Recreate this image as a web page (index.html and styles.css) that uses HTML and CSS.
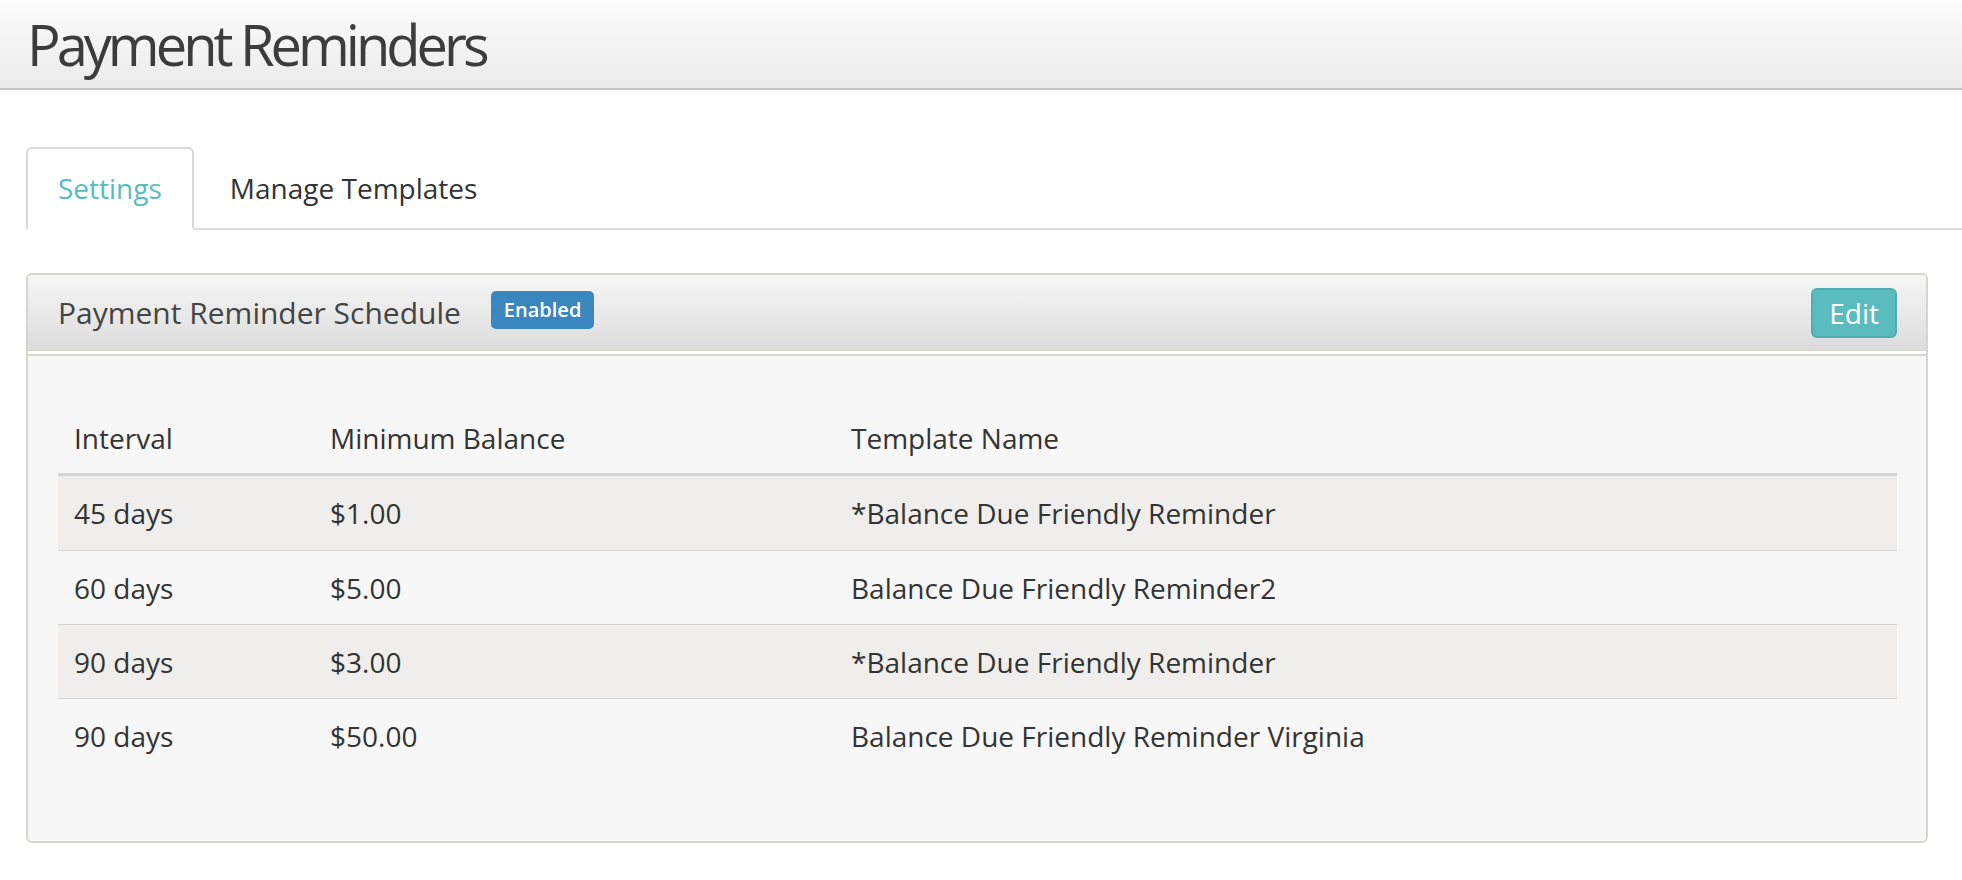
FILE: index.html
```html
<!DOCTYPE html>
<html lang="en">
<head>
<meta charset="utf-8">
<title>Payment Reminders</title>
<link rel="stylesheet" href="styles.css">
</head>
<body>
<header class="page-header">
  <h1 class="page-title">Payment Reminders</h1>
</header>
<main class="content">
  <nav class="tabs">
    <a class="tab tab-active">Settings</a>
    <a class="tab">Manage Templates</a>
  </nav>
  <section class="panel">
    <div class="panel-head">
      <h2 class="panel-title">Payment Reminder Schedule</h2>
      <span class="badge">Enabled</span>
      <button class="btn-edit">Edit</button>
    </div>
    <div class="panel-body">
      <table class="schedule">
        <colgroup>
          <col class="col-interval">
          <col class="col-balance">
          <col>
        </colgroup>
        <thead>
          <tr><th>Interval</th><th>Minimum Balance</th><th>Template Name</th></tr>
        </thead>
        <tbody>
          <tr><td>45 days</td><td>$1.00</td><td>*Balance Due Friendly Reminder</td></tr>
          <tr><td>60 days</td><td>$5.00</td><td>Balance Due Friendly Reminder2</td></tr>
          <tr><td>90 days</td><td>$3.00</td><td>*Balance Due Friendly Reminder</td></tr>
          <tr><td>90 days</td><td>$50.00</td><td>Balance Due Friendly Reminder Virginia</td></tr>
        </tbody>
      </table>
    </div>
  </section>
</main>
</body>
</html>
```

FILE: styles.css
```css
html, body {
  margin: 0;
  padding: 0;
  background: #ffffff;
}

body {
  font-family: "Open Sans", "Liberation Sans", sans-serif;
  color: #333333;
}

.page-header {
  height: 88px;
  background: linear-gradient(#fcfcfc, #ebebeb);
  border-bottom: 2px solid #c4c4c4;
}

.page-title {
  margin: 0;
  padding-left: 27px;
  font-size: 56px;
  font-weight: 400;
  letter-spacing: -4px;
  line-height: 88px;
  color: #3c3c3c;
}

.content {
  padding: 57px 0 0 26px;
}

.tabs {
  display: flex;
  border-bottom: 2px solid #dddddd;
}

.tab {
  display: block;
  margin-right: 4px;
  margin-bottom: -2px;
  padding: 0 30px;
  font-size: 28px;
  line-height: 79px;
  color: #333333;
  border: 2px solid transparent;
  border-radius: 6px 6px 0 0;
}

.tab-active {
  color: #56bcc0;
  background: #ffffff;
  border-color: #d9d9d9 #d9d9d9 #ffffff;
}

.panel {
  margin: 43px 34px 0 0;
  border: 2px solid #d6d6cf;
  border-radius: 6px;
  background: #ffffff;
  overflow: hidden;
}

.panel-head {
  display: flex;
  align-items: center;
  height: 75px;
  padding: 0 29px 0 30px;
  background: linear-gradient(#f6f6f6, #dcdcdc);
  border-bottom: 1px solid #d2d2cb;
}

.panel-title {
  margin: 0;
  font-size: 30px;
  font-weight: 400;
  color: #444444;
}

.badge {
  margin: 0 0 6px 30px;
  padding: 0 13px;
  height: 38px;
  line-height: 37px;
  font-size: 20px;
  font-weight: 600;
  color: #ffffff;
  background: #3a87bf;
  border-radius: 5px;
}

.btn-edit {
  margin-left: auto;
  height: 50px;
  padding: 0 16px;
  font-family: inherit;
  font-size: 28px;
  color: #ffffff;
  background: #5bbcbf;
  border: 2px solid #4eaeb1;
  border-radius: 6px;
}

.panel-body {
  margin-top: 3px;
  padding: 47px 29px 69px 30px;
  background: #f7f7f7;
  border-top: 2px solid #d6d6cf;
}

.schedule {
  width: 100%;
  border-collapse: collapse;
  font-size: 28px;
  color: #333333;
}

.col-interval {
  width: 256px;
}

.col-balance {
  width: 521px;
}

.schedule th {
  height: 70px;
  padding: 0 16px;
  text-align: left;
  font-weight: 400;
  border-bottom: 3px solid #d5d5d5;
}

.schedule td {
  height: 73px;
  padding: 0 16px;
  border-top: 1px solid #d3d3d3;
}

.schedule tbody tr:first-child td {
  border-top: none;
  height: 74px;
}

.schedule tbody tr:nth-child(odd) {
  background: #efeeec;
}
```
